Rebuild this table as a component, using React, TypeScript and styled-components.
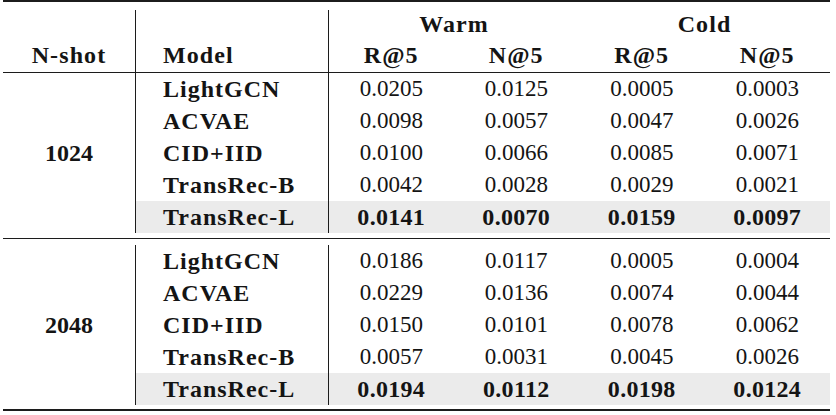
import React from 'react';
import styled, { createGlobalStyle } from 'styled-components';

const GlobalStyle = createGlobalStyle`
  html, body {
    margin: 0;
    padding: 0;
    background: #ffffff;
  }
  body {
    font-family: 'Liberation Serif', 'Times New Roman', serif;
    color: #141414;
  }
`;

const Page = styled.div`
  padding: 0 6px 0 3px;
  width: 836px;
  height: 415px;
  box-sizing: border-box;
`;

const Table = styled.table`
  width: 827px;
  table-layout: fixed;
  border-collapse: separate;
  border-spacing: 0;
  font-size: 23px;
`;

const Rule = styled.div<{ thick?: boolean; before?: number; after?: number }>`
  height: ${(p) => (p.thick ? 2 : 1)}px;
  background: #1c1c1c;
  margin: ${(p) => p.before ?? 0}px 0 ${(p) => p.after ?? 0}px;
`;

const RuleCell = styled.td`
  padding: 0;
`;

type CellTypings = {
  line?: boolean;
  shade?: boolean;
  bold?: boolean;
};

const Cell = styled.td<CellTypings>`
  padding: 0;
  height: 32px;
  text-align: center;
  vertical-align: middle;
  white-space: nowrap;
  font-weight: ${(p) => (p.bold ? 700 : 400)};
  font-size: ${(p) => (p.bold ? 24 : 23)}px;
  letter-spacing: ${(p) => (p.bold ? 0.3 : 0)}px;
  border-left: ${(p) => (p.line ? '1px solid #1c1c1c' : 'none')};
  background: ${(p) => (p.shade ? '#ebebeb' : 'transparent')};
`;

const ModelCell = styled(Cell)`
  text-align: left;
  padding-left: 27px;
  font-weight: 700;
  font-size: 24px;
  letter-spacing: 1px;
`;

const GroupCell = styled(Cell)`
  font-weight: 700;
  font-size: 24px;
  letter-spacing: 0;
`;

const HeadCell = styled.th<{ line?: boolean; tall?: boolean; left?: boolean }>`
  padding: 0;
  height: ${(p) => (p.tall ? 34 : 28)}px;
  font-size: 24px;
  font-weight: 700;
  text-align: ${(p) => (p.left ? 'left' : 'center')};
  padding-left: ${(p) => (p.left ? 27 : 0)}px;
  vertical-align: middle;
  border-left: ${(p) => (p.line ? '1px solid #1c1c1c' : 'none')};
  letter-spacing: 1.1px;
`;

const HeadRow = styled.tr<{ ruled?: boolean }>`
  & > th {
    border-bottom: ${(p) => (p.ruled ? '1px solid #1c1c1c' : 'none')};
  }
`;

type Row = {
  model: string;
  values: string[];
  best?: boolean;
};

type Group = {
  shots: string;
  rows: Row[];
};

const groups: Group[] = [
  {
    shots: '1024',
    rows: [
      { model: 'LightGCN', values: ['0.0205', '0.0125', '0.0005', '0.0003'] },
      { model: 'ACVAE', values: ['0.0098', '0.0057', '0.0047', '0.0026'] },
      { model: 'CID+IID', values: ['0.0100', '0.0066', '0.0085', '0.0071'] },
      { model: 'TransRec-B', values: ['0.0042', '0.0028', '0.0029', '0.0021'] },
      { model: 'TransRec-L', values: ['0.0141', '0.0070', '0.0159', '0.0097'], best: true },
    ],
  },
  {
    shots: '2048',
    rows: [
      { model: 'LightGCN', values: ['0.0186', '0.0117', '0.0005', '0.0004'] },
      { model: 'ACVAE', values: ['0.0229', '0.0136', '0.0074', '0.0044'] },
      { model: 'CID+IID', values: ['0.0150', '0.0101', '0.0078', '0.0062'] },
      { model: 'TransRec-B', values: ['0.0057', '0.0031', '0.0045', '0.0026'] },
      { model: 'TransRec-L', values: ['0.0194', '0.0112', '0.0198', '0.0124'], best: true },
    ],
  },
];

const RuleRow = ({ thick, before, after }: { thick?: boolean; before?: number; after?: number }) => (
  <tr>
    <RuleCell colSpan={6}>
      <Rule thick={thick} before={before} after={after} />
    </RuleCell>
  </tr>
);

const App = () => {
  return (
    <Page>
      <GlobalStyle />
      <Table>
        <colgroup>
          <col style={{ width: 132 }} />
          <col style={{ width: 193 }} />
          <col />
          <col />
          <col />
          <col />
        </colgroup>
        <tbody>
          <RuleRow thick after={8} />
          <HeadRow>
            <HeadCell />
            <HeadCell line />
            <HeadCell line colSpan={2}>
              Warm
            </HeadCell>
            <HeadCell colSpan={2}>Cold</HeadCell>
          </HeadRow>
          <HeadRow ruled>
            <HeadCell tall>N-shot</HeadCell>
            <HeadCell tall line left>
              Model
            </HeadCell>
            <HeadCell tall line>
              R@5
            </HeadCell>
            <HeadCell tall>N@5</HeadCell>
            <HeadCell tall>R@5</HeadCell>
            <HeadCell tall>N@5</HeadCell>
          </HeadRow>
          {groups.map((group, gi) => (
            <React.Fragment key={group.shots}>
              {gi > 0 && <RuleRow before={5} after={6} />}
              {group.rows.map((row, ri) => (
                <tr key={row.model}>
                  {ri === 0 && <GroupCell rowSpan={group.rows.length}>{group.shots}</GroupCell>}
                  <ModelCell line shade={row.best}>
                    {row.model}
                  </ModelCell>
                  {row.values.map((v, vi) => (
                    <Cell key={vi} line={vi === 0} shade={row.best} bold={row.best}>
                      {v}
                    </Cell>
                  ))}
                </tr>
              ))}
            </React.Fragment>
          ))}
          <RuleRow thick before={4} />
        </tbody>
      </Table>
    </Page>
  );
};

export default App;
